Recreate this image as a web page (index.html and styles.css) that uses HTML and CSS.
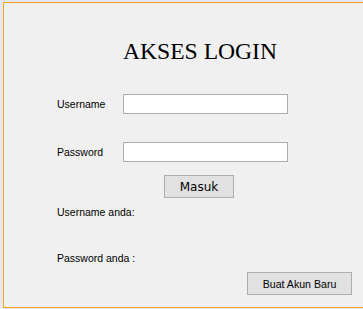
FILE: index.html
```html
<!DOCTYPE html>
<html>
<head>
<meta charset="utf-8">
<link rel="stylesheet" href="styles.css">
</head>
<body>
<div class="frame">
  <div class="title">AKSES LOGIN</div>
  <div class="row first">
    <span class="label">Username</span>
    <input class="field" type="text">
  </div>
  <div class="row second">
    <span class="label">Password</span>
    <input class="field" type="password">
  </div>
  <button class="btn masuk">Masuk</button>
  <div class="info user">Username anda:</div>
  <div class="info pass">Password anda :</div>
  <button class="btn baru">Buat Akun Baru</button>
</div>
</body>
</html>
```
FILE: styles.css
```css
html, body {
  margin: 0;
  padding: 0;
}
body {
  background: #e6e7f7;
  width: 363px;
  height: 309px;
  overflow: hidden;
  font-family: "Liberation Sans", Arial, sans-serif;
  font-size: 10.5px;
  color: #000;
}
.frame {
  margin: 2px 0 0 3px;
  height: 304px;
  background: #f0f0f0;
  border-top: 1px solid #ffa31a;
  border-left: 1px solid #ffa31a;
  border-bottom: 1px solid #ffa31a;
  padding-left: 53px;
  display: flex;
  flex-direction: column;
  align-items: flex-start;
}
.title {
  margin-top: 35px;
  margin-left: 66px;
  font-family: "Liberation Serif", "Times New Roman", serif;
  font-size: 23.6px;
  line-height: 27px;
  white-space: nowrap;
}
.row {
  display: flex;
  align-items: center;
  height: 20px;
}
.row.first { margin-top: 29px; }
.row.second { margin-top: 28px; }
.label {
  width: 66px;
  line-height: 13px;
}
.field {
  box-sizing: border-box;
  width: 165px;
  height: 20px;
  margin: 0;
  padding: 0 3px;
  border: 1px solid #abadb3;
  background: #fff;
  outline: none;
}
.btn {
  box-sizing: border-box;
  height: 23px;
  margin: 0;
  padding: 0;
  border: 1px solid #adadad;
  background: #e1e1e1;
  color: #000;
  border-radius: 0;
}
.masuk {
  margin-top: 13px;
  margin-left: 107px;
  width: 70px;
  font-family: "DejaVu Sans", Tahoma, sans-serif;
  font-size: 12px;
}
.info {
  line-height: 13px;
}
.info.user { margin-top: 8px; }
.info.pass { margin-top: 33px; }
.baru {
  margin-top: 7px;
  margin-left: 190px;
  width: 105px;
  font-family: "Liberation Sans", Arial, sans-serif;
  font-size: 10.6px;
}
```
